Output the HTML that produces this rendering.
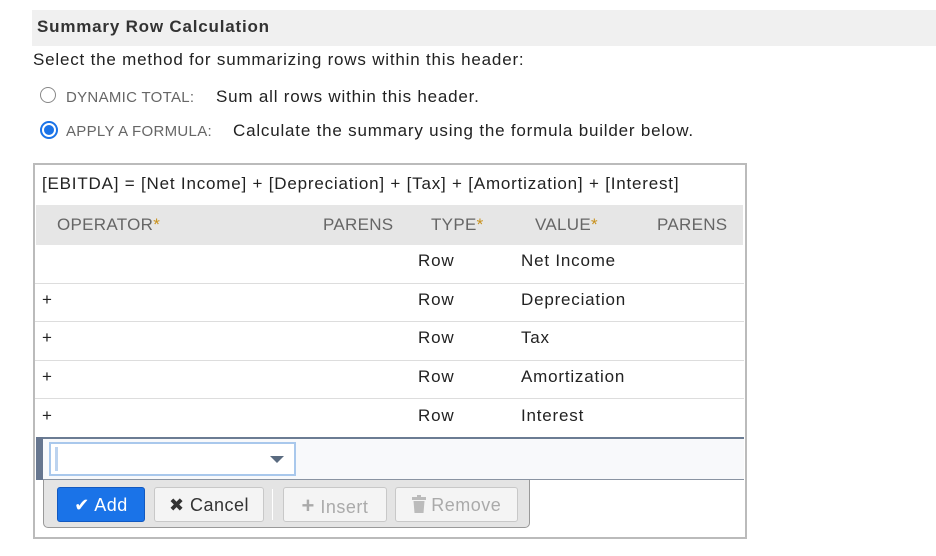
<!DOCTYPE html><html><head><style>
body{margin:0;width:936px;height:556px;background:#fff;font-family:"Liberation Sans",sans-serif;color:#222;position:relative;overflow:hidden;letter-spacing:0.8px}
.a{position:absolute;white-space:nowrap}
.hd{left:32px;top:10px;width:904px;height:36px;background:#f0f0f0}
.t{font-size:17px}
.g{color:#666;font-size:15px;letter-spacing:0.3px}
.st{color:#c8901a}
.btn{position:absolute;top:487px;height:35px;border:1px solid #c8c8c8;border-radius:3px;background:#f4f4f4;font-size:18px;line-height:35px;text-align:center;box-sizing:border-box;letter-spacing:0.5px}
</style></head><body>
<div class="a hd"></div>
<div class="a" style="left:37px;top:17px;font-size:17px;font-weight:bold;color:#333">Summary Row Calculation</div>
<div class="a t" style="left:33px;top:50px">Select the method for summarizing rows within this header:</div>
<div class="a" style="left:40px;top:87px;width:16px;height:16px;border:1px solid #888;border-radius:50%;box-sizing:border-box"></div>
<div class="a g" style="left:66px;top:89px">DYNAMIC TOTAL:</div>
<div class="a t" style="left:216px;top:87px">Sum all rows within this header.</div>
<div class="a" style="left:40px;top:121px;width:18px;height:18px;border:2px solid #1a73e8;border-radius:50%;box-sizing:border-box"><div style="margin:2px;width:10px;height:10px;border-radius:50%;background:#1a73e8"></div></div>
<div class="a g" style="left:66px;top:123px">APPLY A FORMULA:</div>
<div class="a t" style="left:233px;top:121px">Calculate the summary using the formula builder below.</div>
<div class="a" style="left:33px;top:163px;width:714px;height:376px;border:2px solid #bbb;box-sizing:border-box"></div>
<div class="a t" style="left:42px;top:174px">[EBITDA] = [Net Income] + [Depreciation] + [Tax] + [Amortization] + [Interest]</div>
<div class="a" style="left:36px;top:205px;width:707px;height:40px;background:#e6e6e6"></div>
<div class="a g" style="left:57px;top:215px;font-size:17px">OPERATOR<span class="st">*</span></div>
<div class="a g" style="left:323px;top:215px;font-size:17px">PARENS</div>
<div class="a g" style="left:431px;top:215px;font-size:17px">TYPE<span class="st">*</span></div>
<div class="a g" style="left:535px;top:215px;font-size:17px">VALUE<span class="st">*</span></div>
<div class="a g" style="left:657px;top:215px;font-size:17px">PARENS</div>
<div class="a" style="left:35px;top:283px;width:709px;border-top:1px solid #ddd"></div>
<div class="a" style="left:35px;top:321px;width:709px;border-top:1px solid #ddd"></div>
<div class="a" style="left:35px;top:360px;width:709px;border-top:1px solid #ddd"></div>
<div class="a" style="left:35px;top:398px;width:709px;border-top:1px solid #ddd"></div>
<div class="a t" style="left:418px;top:251px">Row</div><div class="a t" style="left:521px;top:251px">Net Income</div>
<div class="a t" style="left:42px;top:290px">+</div><div class="a t" style="left:418px;top:290px">Row</div><div class="a t" style="left:521px;top:290px">Depreciation</div>
<div class="a t" style="left:42px;top:328px">+</div><div class="a t" style="left:418px;top:328px">Row</div><div class="a t" style="left:521px;top:328px">Tax</div>
<div class="a t" style="left:42px;top:367px">+</div><div class="a t" style="left:418px;top:367px">Row</div><div class="a t" style="left:521px;top:367px">Amortization</div>
<div class="a t" style="left:42px;top:406px">+</div><div class="a t" style="left:418px;top:406px">Row</div><div class="a t" style="left:521px;top:406px">Interest</div>
<div class="a" style="left:36px;top:437px;width:708px;height:43px;background:#f8f9fb;border-top:2px solid #6b7c93;border-bottom:1px solid #8a94a2;box-sizing:border-box"></div>
<div class="a" style="left:36px;top:437px;width:7px;height:43px;background:#66768f"></div>
<div class="a" style="left:49px;top:442px;width:247px;height:34px;border:2px solid #a9c8ec;background:#fff;box-sizing:border-box"></div>
<div class="a" style="left:55px;top:447px;width:3px;height:24px;background:#bcd3ef"></div>
<div class="a" style="left:270px;top:456px;width:0;height:0;border-left:7px solid transparent;border-right:7px solid transparent;border-top:7px solid #5a6b80"></div>
<div class="a" style="left:43px;top:480px;width:487px;height:48px;background:#e4e4e4;border:1px solid #999;border-top:none;border-radius:0 0 5px 5px;box-sizing:border-box"></div>
<div class="btn" style="left:57px;width:88px;background:#1a73e8;border-color:#1259c0;color:#fff">✔ Add</div>
<div class="btn" style="left:154px;width:110px;color:#333">✖ Cancel</div>
<div class="a" style="left:272px;top:489px;width:1px;height:31px;background:#fff"></div>
<div class="btn" style="left:283px;width:104px;color:#aaa"><b style="font-size:22px">+</b> Insert</div>
<div class="btn" style="left:395px;width:123px;color:#aaa"><svg width="14" height="18" viewBox="0 0 14 18" style="vertical-align:-2px"><rect x="0" y="2" width="14" height="3" fill="#bbb"/><rect x="5" y="0" width="4" height="2" fill="#bbb"/><path d="M1.5 6h11l-1 12h-9z" fill="#bbb"/></svg> Remove</div>
</body></html>
